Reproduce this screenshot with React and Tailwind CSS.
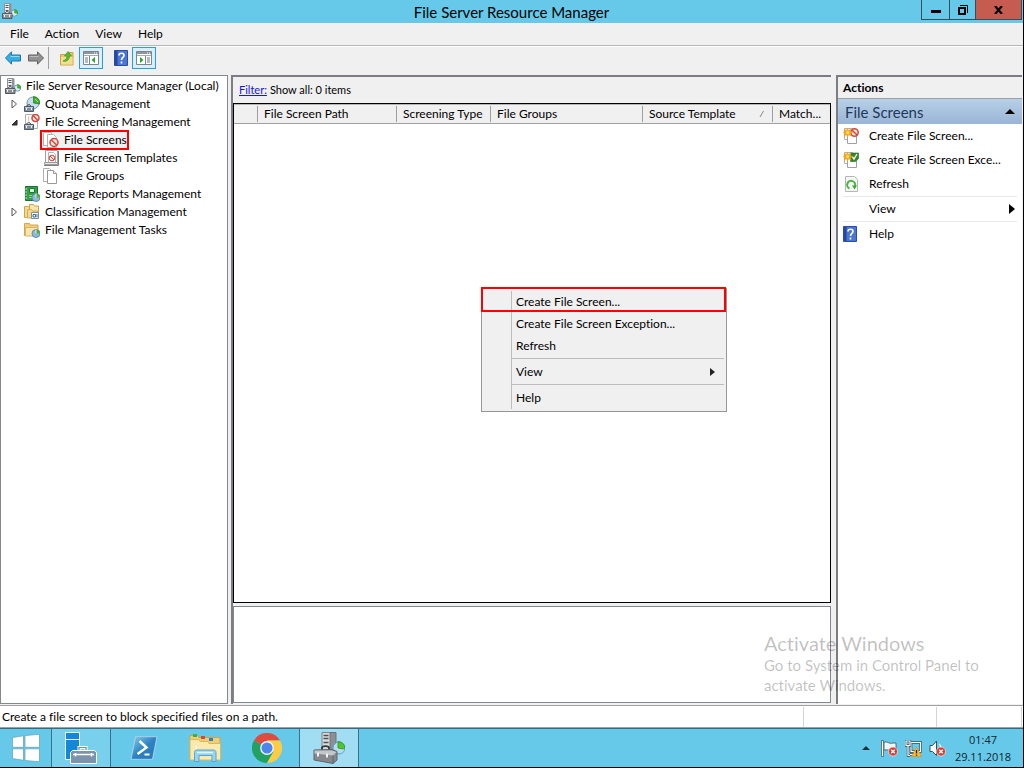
import clsx from 'clsx';

const ServerIcon = ({ className = 'size-8' }) => (
  <svg viewBox="0 0 32 32" className={className} aria-hidden="true">
    <path d="M9 .5h9v19H9z" fill="#d9dcde" stroke="#7d8286" />
    <path d="M17 .5h6v20h-6z" fill="#8b9094" stroke="#6d7276" />
    <path d="M10.500 3.500h5M10.500 6.500h5M10.500 10.500h5" stroke="#4b5054" strokeWidth="1.500" />
    <circle cx="26" cy="16" r="6" fill="#b4dcf2" stroke="#5b9fc8" />
    <path d="M25 16V9.500a7 7 0 0 1 7 6.500l-2 1z" fill="#4fc52c" stroke="#2c8d16" strokeWidth=".7" />
    <path d="M9 18v-2c0-2.500 7-2.500 7 0v2" fill="none" stroke="#33383c" strokeWidth="1.800" />
    <path d="M1 18l18-.5 5 2v8.500l-4 3.500-19-3.500z" fill="#85898d" stroke="#5f6468" />
    <path d="M1.500 18.500h17.500l4.500 1.500-3.500 3.500-18.500-2z" fill="#c3c7ca" />
    <path d="M5 20.500v4M14 21.500v4" stroke="#f1f2f3" strokeWidth="2" />
    <path d="M20 23.500v8" stroke="#5f6468" />
  </svg>
);

const SmallServerIcon = () => (
  <svg viewBox="0 0 16 16" className="size-4" aria-hidden="true">
    <path d="M2.500.5h6v12h-6z" fill="#f0f1f2" stroke="#8f9498" />
    <path d="M7 1h2.500v11H7z" fill="#8f9498" />
    <path d="M3.500 2.500h3M3.500 4.500h3M3.500 7.500h3" stroke="#53585c" />
    <circle cx="12.500" cy="10" r="3.200" fill="#d7ebf6" stroke="#6996b2" strokeWidth=".9" />
    <path d="M12.500 10V6.400a3.600 3.600 0 0 1 3.400 4z" fill="#3fb52c" stroke="#2c8d16" strokeWidth=".4" />
    <path d="M3.500 10.500V9.400c0-1 3.500-1 3.500 0v1.100" fill="none" stroke="#3d4246" />
    <path d="M.5 10.500h9.500v5H.5z" fill="#8a8f93" stroke="#565b5f" />
    <path d="M1 11.500h8.500" stroke="#c8cccf" />
    <path d="M2.500 12v2M7.500 12v2" stroke="#f1f2f3" />
  </svg>
);

const Toolbox = () => (
  <>
    <path d="M3 10.500V9.500c0-1 3.500-1 3.500 0v1" fill="none" stroke="#2f3b46" />
    <path d="M.5 10.500h9v5h-9z" fill="#84909b" stroke="#4b5966" />
    <path d="M1 11.500h8" stroke="#c2ccd5" />
    <path d="M2.500 12v2M7.500 12v2" stroke="#f0f3f5" />
  </>
);

const NoSign = ({ cx, cy, r }) => (
  <>
    <circle cx={cx} cy={cy} r={r} fill="#fbe7e4" stroke="#d2463a" strokeWidth="1.500" />
    <path d={`M${cx - r * 0.7} ${cy - r * 0.7}l${r * 1.4} ${r * 1.4}`} stroke="#d2463a" strokeWidth="1.500" />
  </>
);

const QuotaIcon = () => (
  <svg viewBox="0 0 16 16" className="size-4" aria-hidden="true">
    <circle cx="9" cy="7" r="6" fill="#c6deee" stroke="#7793aa" />
    <path d="M9.500 7V.5A6.500 6.500 0 0 1 15.800 8z" fill="#3fae2a" stroke="#247b18" strokeWidth=".7" />
    <path d="M11 3l3 3" stroke="#a8e48b" />
    <Toolbox />
  </svg>
);

const ScreeningIcon = () => (
  <svg viewBox="0 0 16 16" className="size-4" aria-hidden="true">
    <path d="M1.500.5h12v14h-12z" fill="#fafafa" stroke="#b0b0b0" />
    <path d="M4.500 2.500v5" stroke="#c8c8c8" />
    <NoSign cx={11.5} cy={4} r={3.5} />
    <Toolbox />
  </svg>
);

const FileScreensIcon = () => (
  <svg viewBox="0 0 16 16" className="size-4" aria-hidden="true">
    <path d="M.5.5h8v13h-8z" fill="#fff" stroke="#b3b3b3" />
    <path d="M4.500 2.500h6l3 3v10h-9z" fill="#fff" stroke="#b3b3b3" />
    <NoSign cx={11} cy={10.5} r={4} />
  </svg>
);

const TemplatesIcon = () => (
  <svg viewBox="0 0 16 16" className="size-4" aria-hidden="true">
    <path d="M2.500.5h12v12h-12z" fill="#f6f8fa" stroke="#a0a0a0" />
    <path d="M15.500 1v14.500H1" fill="none" stroke="#7e7e7e" />
    <path d="M5.500 2.500h5l2 2v8h-7z" fill="#fff" stroke="#b3b3b3" />
    <path d="M1.500 12.500h13v2h-13z" fill="#e5e8ea" stroke="#9a9a9a" />
    <circle cx="9" cy="8" r="2.800" fill="#fbe7e4" stroke="#d2463a" />
    <path d="M7 6l4 4" stroke="#d2463a" />
  </svg>
);

const FilesIcon = () => (
  <svg viewBox="0 0 16 16" className="size-4" aria-hidden="true">
    <path d="M.5.5h6l3 3v10h-9z" fill="#fff" stroke="#b0b0b0" />
    <path d="M4.500 2.500h6l3 3v10h-9z" fill="#fff" stroke="#9a9a9a" />
    <path d="M10.500 2.500v3h3" fill="#eee" stroke="#9a9a9a" />
  </svg>
);

const MiniPie = () => (
  <>
    <circle cx="12" cy="11.500" r="4" fill="#8fb9dc" stroke="#4d7ba5" strokeWidth=".8" />
    <path d="M12 11.500v-4a4 4 0 0 1 4 4z" fill="#54ac3a" />
    <path d="M12 11.500v-4" stroke="#fff" strokeWidth=".8" />
  </>
);

const ReportsIcon = () => (
  <svg viewBox="0 0 16 16" className="size-4" aria-hidden="true">
    <path d="M1.500.5h12v14h-12z" fill="#35a046" stroke="#167030" />
    <path d="M5.500 2.500h5v4h-5z" fill="#d9f1d9" stroke="#1c7832" />
    <path d="M0 3h3M0 6h3M0 9h3M0 12h3" stroke="#c7dccb" />
    <path d="M5 9.500h4M5 11.500h3" stroke="#8dd08e" />
    <MiniPie />
  </svg>
);

const ClassificationIcon = () => (
  <svg viewBox="0 0 16 16" className="size-4" aria-hidden="true">
    <path d="M.5 2.500h4l1 1h3v10h-8z" fill="#f3d98d" stroke="#c9a654" />
    <path d="M5.500.5h4l1 1.500h4v10h-9z" fill="#f8e5a9" stroke="#c9a654" />
    <path d="M3.500 5.500h4l1 1.500h5v7h-10z" fill="#f5d889" stroke="#d0ad5e" />
    <path d="M7.500 8.500h7v6h-7z" fill="#fff" stroke="#7b8fa3" />
    <path d="M9 10.500h2.500v2.500H9zM13 10v3.500" fill="none" stroke="#3d6b99" />
  </svg>
);

const TasksIcon = () => (
  <svg viewBox="0 0 16 16" className="size-4" aria-hidden="true">
    <path d="M.5 1.500h5l1 1.500h7.500v10.500H.5z" fill="#f0cd78" stroke="#cfa755" />
    <path d="M1.500 5.500h12l-1 8.500h-11z" fill="#fae6aa" stroke="#dab566" />
    <MiniPie />
  </svg>
);

const HelpIcon = () => (
  <svg viewBox="0 0 14 16" className="h-4 w-3.5" aria-hidden="true">
    <path d="M.5.5h13v15H.5z" fill="#4a77d6" stroke="#2a4ea6" />
    <path d="M1 1h2.500v14H1z" fill="#2747a0" />
    <path d="M5 5.500C5 2.500 10 2.500 10 5.500c0 2-2.500 2-2.500 4.500M7.500 11.500v2" fill="none" stroke="#fff" strokeWidth="1.600" />
  </svg>
);

const ArrowIcon = ({ forward }) => (
  <svg viewBox="0 0 16 14" className="h-3.5 w-4" aria-hidden="true">
    {forward ? (
      <path d="M15.500 7L9.500.8V4H.5v6h9v3.200z" fill="#929292" stroke="#606060" />
    ) : (
      <path d="M.5 7L6.500.8V4h9v6h-9v3.200z" fill="#35aee3" stroke="#2277ad" />
    )}
    <path d={forward ? 'M1.500 5.500h9' : 'M5.500 5.500h9'} stroke={forward ? '#bdbdbd' : '#90daf6'} />
  </svg>
);

const UpFolderIcon = () => (
  <svg viewBox="0 0 16 16" className="size-4" aria-hidden="true">
    <path d="M1.500 4.500h7l1-2h4.500v12.500H1.500z" fill="#e9c767" stroke="#c9a44a" />
    <path d="M2 7h11.500v7.500H2z" fill="#f6dd8e" />
    <path d="M4 11c3-1 4-3 4-5H5.500L9 1.500 12.500 6h-2c0 4-3 6-6.500 5z" fill="#55bb32" stroke="#3b9a22" strokeWidth=".7" />
  </svg>
);

const PaneIcon = ({ right }) => (
  <svg viewBox="0 0 16 14" className="h-3.5 w-4" aria-hidden="true">
    <path d="M.5.500h15v13H.5z" fill="#fff" stroke="#7d858d" />
    <path d="M1 1h14v2H1z" fill="#8d969f" />
    <path d="M11 2h1M13 2h1" stroke="#fff" />
    <path d="M1 4.500h14" stroke="#a5adb4" />
    <path d={right ? 'M9.500 5v8' : 'M6.500 5v8'} stroke="#7d858d" />
    <path d={right ? 'M11 7h3M11 9h3M11 11h3' : 'M2 7h3M2 9h3M2 11h3'} stroke="#62778c" />
    <path d={right ? 'M4 6l3.500 3L4 12z' : 'M12 6L8.500 9l3.500 3z'} fill="#2fa32b" />
  </svg>
);

const NewFileIcon = ({ exception }) => (
  <svg viewBox="0 0 16 16" className="size-4" aria-hidden="true">
    <path d="M1.500.5h8v11h-8z" fill="#fff" stroke="#b0b0b0" />
    <path d="M4.500 4.500h9v11h-9z" fill="#fff" stroke="#a0a0a0" />
    {exception ? (
      <>
        <path d="M7.500 1h8v5.500l-3 3h-5z" fill="#35872c" stroke="#246a20" strokeWidth=".6" />
        <path d="M9.500 5l1.500 2 3-5" fill="none" stroke="#fff" strokeWidth="1.300" />
      </>
    ) : (
      <NoSign cx={11.5} cy={4.5} r={3.7} />
    )}
    <path d="M4.500 0l1 2.500L8 1 7 3.500l3 1-3 1L8 8 5.500 6.800l-1 2.700-1-2.700L1 8l1-2.500L0 4.500l2-1L1 1l2.500 1.500z" fill="#f7a916" stroke="#e9a52c" strokeWidth=".5" />
    <circle cx="4.700" cy="4.500" r="1.500" fill="#ffe36b" />
  </svg>
);

const RefreshIcon = () => (
  <svg viewBox="0 0 16 16" className="size-4" aria-hidden="true">
    <path d="M2.500.5h9l3 3v12h-12z" fill="#f7f7f7" stroke="#b6b6b6" />
    <path d="M6.500 12.500a4 4 0 1 1 5.500-2.500" fill="none" stroke="#4cb53c" strokeWidth="2" />
    <path d="M9 9.500h5L11.500 13.500z" fill="#39a935" />
  </svg>
);

const WindowsLogo = () => (
  <svg viewBox="0 0 28 28" className="size-7" aria-hidden="true">
    <path d="M.5 3.500l11-1.700v11.500H.5zM13 1.600L27.500.3v13H13zM.5 14.800h11v11.500L.5 24.600zM13 14.800h14.500v12.900L13 26.500z" fill="#fff" stroke="#5e9db7" strokeWidth=".7" />
  </svg>
);

const ServerManagerIcon = () => (
  <svg viewBox="0 0 32 32" className="size-8" aria-hidden="true">
    <path d="M.5.5h14v27H.5z" fill="#1488d8" stroke="#e8f7fd" />
    <path d="M1 7.500h13" stroke="#e8f7fd" />
    <path d="M14 18.500v-3h7v3" fill="none" stroke="#fff" strokeWidth="3" />
    <path d="M14 18.500v-3h7v3" fill="none" stroke="#6e8aa6" strokeWidth="1.200" />
    <path d="M7.500 18.500h22l2 2v11h-26v-11z" fill="#7d92ab" stroke="#fff" />
    <path d="M8 22.500h21M10.500 21v3.500M26.500 21v3.500" stroke="#fff" strokeWidth="1.400" />
  </svg>
);

const PowerShellIcon = () => (
  <svg viewBox="0 0 28 24" className="h-6 w-7" aria-hidden="true">
    <defs>
      <linearGradient id="ps" x1="0" y1="0" x2="1" y2="1">
        <stop offset="0" stopColor="#8dd0ee" />
        <stop offset=".5" stopColor="#2d83c4" />
        <stop offset="1" stopColor="#2a74b5" />
      </linearGradient>
    </defs>
    <path d="M5.500.7H27L22.500 23.300H1z" fill="url(#ps)" stroke="#a9d2e6" />
    <path d="M9.500 5l7 6.500-9 6.500" fill="none" stroke="#fff" strokeWidth="2.500" />
    <path d="M14.500 18.500h5" stroke="#fff" strokeWidth="2" />
  </svg>
);

const ExplorerIcon = () => (
  <svg viewBox="0 0 32 30" className="size-8" aria-hidden="true">
    <path d="M1 2.500h8l1 2h21V26H1z" fill="#f0cf72" stroke="#cda448" />
    <path d="M4 1h4v3H4z" fill="#3eae4b" />
    <path d="M12 3h4v3h-4z" fill="#d24b36" />
    <path d="M20 5h4v3h-4z" fill="#357ec2" />
    <path d="M1 6.500h9l1 2h8l1 2h11.500V27H1z" fill="#fbe9ad" stroke="#ddb75b" />
    <path d="M7 12l1 14" stroke="#fffbe0" strokeWidth="1.500" />
    <path d="M5.500 19.500c0-2 1-2.500 2.500-2.500h16c2 0 3 1 3 2.500v9h-4v-6h-13v6h-4.500z" fill="#97d6f1" stroke="#5aa3cb" />
    <path d="M8 19.500h16" stroke="#dff5fd" strokeWidth="1.500" />
  </svg>
);

const ChromeIcon = () => (
  <svg viewBox="0 0 30 30" className="size-[30px]" aria-hidden="true">
    <path d="M15 15L2 7.500A15 15 0 0 1 28 7.500H15z" fill="#df4b3d" />
    <path d="M15 15L8.500 11.200 2 7.500A15 15 0 0 0 15 30l6.500-11.200z" fill="#22a162" />
    <path d="M15 30A15 15 0 0 0 28 7.500H15l6.500 11.200z" fill="#fdcc43" />
    <circle cx="15" cy="15" r="6.900" fill="#f1f1f1" />
    <circle cx="15" cy="15" r="5.500" fill="#4c86ec" />
  </svg>
);

const ErrorBadge = () => (
  <>
    <circle cx="12" cy="11.500" r="4.500" fill="#dc382d" stroke="#fbe9e7" strokeWidth=".7" />
    <path d="M10.200 9.700l3.600 3.600M13.800 9.700l-3.600 3.600" stroke="#fff" strokeWidth="1.400" />
  </>
);

const FlagTrayIcon = () => (
  <svg viewBox="0 0 17 17" className="size-[17px]" aria-hidden="true">
    <path d="M1.500.5v16" stroke="#2d4d5b" strokeWidth="3" />
    <path d="M3 2.500c3-2 5 2 9 .5h3v7c-4 2-7-1-12 0z" fill="#eef7fa" stroke="#38505c" strokeWidth=".8" />
    <path d="M1.500 1v15" stroke="#fff" strokeWidth="1.500" />
    <ErrorBadge />
  </svg>
);

const NetworkTrayIcon = () => (
  <svg viewBox="0 0 17 17" className="size-[17px]" aria-hidden="true">
    <path d="M6 2.500h9.500v9H6zM5 14.500h6" fill="#67c9e9" stroke="#34505e" strokeWidth="2.600" />
    <path d="M6 2.500h9.500v9H6zM5 14.500h6" fill="none" stroke="#fff" strokeWidth="1.200" />
    <path d="M1 1h4v4.500H1zM3 6v9.500h2" fill="#9bd6ea" stroke="#34505e" strokeWidth="2.400" />
    <path d="M1 1h4v4.500H1zM3 6v9.500h2" fill="none" stroke="#fff" strokeWidth="1.200" />
    <path d="M11.500 7l5 9.500h-10z" fill="#fcb930" stroke="#d58a15" strokeWidth=".6" />
    <path d="M11.500 10v3.500M11.500 14.500v1.300" stroke="#342808" strokeWidth="1.300" />
  </svg>
);

const SoundTrayIcon = () => (
  <svg viewBox="0 0 17 17" className="size-[17px]" aria-hidden="true">
    <path d="M1 5.500h2.500L7.500 1v14.500l-4-4H1z" fill="#f6fbfd" stroke="#38505c" />
    <path d="M10 4c1.500 1 2 2 2 4" fill="none" stroke="#fff" strokeWidth="1.200" />
    <ErrorBadge />
  </svg>
);

const TREE = [
  { label: 'Quota Management', icon: <QuotaIcon />, level: 1, arrow: 'closed' },
  { label: 'File Screening Management', icon: <ScreeningIcon />, level: 1, arrow: 'open' },
  { label: 'File Screens', icon: <FileScreensIcon />, level: 2, selected: true },
  { label: 'File Screen Templates', icon: <TemplatesIcon />, level: 2 },
  { label: 'File Groups', icon: <FilesIcon />, level: 2 },
  { label: 'Storage Reports Management', icon: <ReportsIcon />, level: 1 },
  { label: 'Classification Management', icon: <ClassificationIcon />, level: 1, arrow: 'closed' },
  { label: 'File Management Tasks', icon: <TasksIcon />, level: 1 },
];

const COLUMNS = [
  { label: '', width: 'w-6' },
  { label: 'File Screen Path', width: 'w-[139px]' },
  { label: 'Screening Type', width: 'w-[94px]' },
  { label: 'File Groups', width: '' },
  { label: 'Source Template', width: 'w-[130px]', sorted: true },
  { label: 'Match...', width: 'w-[57px]' },
];

function TitleBar() {
  return (
    <header className="relative flex h-[23px] shrink-0 items-center justify-center bg-[#67c9e9]">
      <span className="absolute left-0.5 top-[3px]"><SmallServerIcon /></span>
      <h1 className="text-[15px] leading-5">File Server Resource Manager</h1>
      <div className="absolute right-px top-0 flex h-5 border border-t-0 border-[#31505c]">
        <button aria-label="Minimize" className="flex w-7 items-center justify-center border-r border-[#31505c]">
          <span className="mt-1 h-[3px] w-2.5 bg-black" />
        </button>
        <button aria-label="Restore" className="flex w-[26px] items-center justify-center border-r border-[#31505c]">
          <svg viewBox="0 0 10 10" className="size-2.5" aria-hidden="true">
            <path d="M1 3h6v6H1z" fill="none" stroke="#000" strokeWidth="2" />
            <path d="M2 .5h7.500V8" fill="none" stroke="#000" />
          </svg>
        </button>
        <button aria-label="Close" className="flex w-[45px] items-center justify-center bg-[#c65b50]">
          <svg viewBox="0 0 9 8" className="h-2 w-[9px]" aria-hidden="true">
            <path d="M1 0l7 8M8 0L1 8" stroke="#000" strokeWidth="2.200" />
          </svg>
        </button>
      </div>
    </header>
  );
}

function Toolbar() {
  return (
    <div className="flex h-[29px] shrink-0 items-center border-t border-white pb-1.5 pl-1">
      <button aria-label="Back" className="mr-1.5 px-px"><ArrowIcon /></button>
      <button aria-label="Forward"><ArrowIcon forward /></button>
      <span className="ml-1 mr-2.5 h-[22px] w-px bg-[#a0a0a0]" />
      <button aria-label="Up" className="mr-1"><UpFolderIcon /></button>
      <button aria-label="Show console tree" className="mr-[11px] flex h-[22px] w-6 items-center justify-center border border-[#26a0da] bg-[#d9effb]">
        <PaneIcon />
      </button>
      <button aria-label="Help" className="mr-1"><HelpIcon /></button>
      <button aria-label="Show action pane" className="flex h-[22px] w-6 items-center justify-center border border-[#26a0da] bg-[#d9effb]">
        <PaneIcon right />
      </button>
    </div>
  );
}

function TreePane() {
  return (
    <nav aria-label="Console tree" className="w-[228px] shrink-0 border border-[#828790] bg-white pt-px">
      <button className="flex h-[18px] items-center gap-[5px] pl-1">
        <SmallServerIcon />
        <span className="whitespace-nowrap">File Server Resource Manager (Local)</span>
      </button>
      <ul>
        {TREE.map((item) => (
          <li key={item.label} className={clsx('flex h-[18px] items-center', item.level === 1 ? 'pl-2' : 'pl-10')}>
            {item.level === 1 && (
              <span className="flex w-3.5 shrink-0 pl-0.5">
                {item.arrow === 'closed' && (
                  <svg viewBox="0 0 7 10" className="h-2.5 w-[7px]" aria-hidden="true">
                    <path d="M1 1l4.500 4L1 9z" fill="#fff" stroke="#555" />
                  </svg>
                )}
                {item.arrow === 'open' && (
                  <svg viewBox="0 0 7 7" className="size-[7px]" aria-hidden="true">
                    <path d="M6 1v5H1z" fill="#404040" stroke="#222" />
                  </svg>
                )}
              </span>
            )}
            <button
              className={clsx(
                'flex h-[18px] items-center gap-[5px] whitespace-nowrap pr-px',
                item.level === 1 ? 'pl-px' : 'pl-0.5',
                item.selected && 'bg-[#f0f0f0] outline-2 -outline-offset-1 outline-[#ff0000]',
              )}
            >
              {item.icon}
              {item.label}
            </button>
          </li>
        ))}
      </ul>
    </nav>
  );
}

function ContextMenu() {
  return (
    <div className="absolute left-[248px] top-[211px] w-[246px] border border-[#979797] bg-[#f0f0f0] p-0.5">
      <div className="flex flex-col [&>button]:h-[22px] [&>button]:pl-8 [&>button]:text-left">
        <button>Create File Screen...</button>
        <button>Create File Screen Exception...</button>
        <button>Refresh</button>
        <hr className="mb-0.5 ml-7 mt-px border-[#bdbdbd]" />
        <button className="flex items-center justify-between pr-[9px]">
          View
          <svg viewBox="0 0 5 8" className="h-2 w-[5px]" aria-hidden="true"><path d="M0 0l5 4-5 4z" fill="#222" /></svg>
        </button>
        <hr className="mb-0.5 ml-7 mt-px border-[#bdbdbd]" />
        <button>Help</button>
      </div>
      <span className="absolute inset-y-0.5 left-[29px] w-px bg-[#bdbdbd]" />
      <span className="pointer-events-none absolute -left-px -top-0.5 right-0 h-[25px] border-2 border-[#ff0000]" />
    </div>
  );
}

function CenterPane() {
  return (
    <main className="relative flex min-w-0 flex-1 flex-col border-l-2 border-t-2 border-[#7b7d80] pb-px">
      <p className="flex h-[26px] shrink-0 items-center gap-[3px] pl-1.5 text-[11px]">
        <a href="#filter" className="text-[#1515ee] underline">Filter:</a>
        <span>Show all: 0 items</span>
      </p>
      <section className="min-h-0 flex-1 border border-black bg-white">
        <table className="w-full table-fixed border-separate border-spacing-0">
          <thead>
            <tr className="bg-[#f0f0f0]">
              {COLUMNS.map((col, i) => (
                <th key={col.label || 'icon'} className={clsx('h-5 border-b border-t border-b-[#a0a0a0] border-t-[#b5b5b5] p-0 text-left font-normal', col.width)}>
                  <div className={clsx('flex h-4 items-center justify-between whitespace-nowrap pl-1.5', i < 5 && 'border-r border-[#a0a0a0]')}>
                    {col.label}
                    {col.sorted && (
                      <svg viewBox="0 0 5 6" className="mr-2 h-1.5 w-[5px]" aria-hidden="true">
                        <path d="M4.500 0L1 6" stroke="#888" />
                      </svg>
                    )}
                  </div>
                </th>
              ))}
            </tr>
          </thead>
        </table>
      </section>
      <section aria-label="Details" className="mt-[3px] h-[97px] shrink-0 border border-[#828790] bg-white" />
      <ContextMenu />
    </main>
  );
}

const Action = ({ icon, children, more }) => (
  <button className="flex h-6 w-full items-center pl-[5px] pr-[7px]">
    <span className="flex w-[26px] shrink-0">{icon}</span>
    <span className="flex-1 truncate text-left">{children}</span>
    {more && (
      <svg viewBox="0 0 6 10" className="h-2.5 w-1.5" aria-hidden="true"><path d="M0 0l6 5-6 5z" fill="#000" /></svg>
    )}
  </button>
);

function ActionsPane() {
  return (
    <aside className="w-[186px] shrink-0 border-l-2 border-t-2 border-[#7b7d80] bg-white">
      <h2 className="h-[22px] border-b border-[#a0a0a0] bg-[#f0f0f0] pl-[5px] font-bold leading-[22px]">Actions</h2>
      <div className="flex h-[25px] items-center justify-between bg-linear-to-b from-[#b7d0e8] to-[#9ab5d5] pl-[7px] pr-[7px] text-[15px] text-[#1e395b]">
        <h3>File Screens</h3>
        <svg viewBox="0 0 10 5" className="h-[5px] w-2.5" aria-hidden="true"><path d="M5 0l5 5H0z" fill="#000" /></svg>
      </div>
      <Action icon={<NewFileIcon />}>Create File Screen...</Action>
      <Action icon={<NewFileIcon exception />}>Create File Screen Exce...</Action>
      <Action icon={<RefreshIcon />}>Refresh</Action>
      <hr className="mx-[5px] border-[#e8e8e8]" />
      <Action more>View</Action>
      <hr className="mx-[5px] border-[#e8e8e8]" />
      <Action icon={<HelpIcon />}>Help</Action>
    </aside>
  );
}

function Taskbar() {
  return (
    <footer className="flex h-10 shrink-0 items-stretch border-b border-t border-b-black border-t-[#3a6a7b] bg-[#67c9e9] [&>button]:flex [&>button]:shrink-0 [&>button]:items-center [&>button]:justify-center">
      <button aria-label="Start" className="w-[51px]"><WindowsLogo /></button>
      <button aria-label="Server Manager" className="w-[60px] border-x border-[#357488] bg-[#79d0ed]"><ServerManagerIcon /></button>
      <button aria-label="PowerShell" className="w-[66px]"><PowerShellIcon /></button>
      <button aria-label="File Explorer" className="w-14"><ExplorerIcon /></button>
      <button aria-label="Chrome" className="w-[66px] pl-0.5"><ChromeIcon /></button>
      <button aria-label="File Server Resource Manager" className="w-[60px] border-x border-[#357488] bg-[#a2def3]">
        <ServerIcon />
      </button>
      <div className="ml-auto flex items-center gap-[7px] pr-3">
        <button aria-label="Show hidden icons" className="mr-1">
          <svg viewBox="0 0 8 4" className="h-1 w-2" aria-hidden="true"><path d="M4 0l4 4H0z" fill="#17313b" /></svg>
        </button>
        <FlagTrayIcon />
        <NetworkTrayIcon />
        <SoundTrayIcon />
        <time className="ml-0.5 text-center font-['Open_Sans'] text-[11px] leading-[17px] text-[#10242c]">
          01:47<br />29.11.2018
        </time>
      </div>
    </footer>
  );
}

export default function App() {
  return (
    <div className="relative flex h-screen flex-col overflow-hidden border-r border-black bg-[#f0f0f0] font-['Lato',sans-serif] text-[12px] leading-[18px] text-black [font-variant-ligatures:none]">
      <TitleBar />
      <div className="flex h-[23px] shrink-0 items-center gap-4 border-b border-[#b5b5ba] pl-2.5">
        <button>File</button>
        <button>Action</button>
        <button>View</button>
        <button>Help</button>
      </div>
      <Toolbar />
      <div className="flex min-h-0 flex-1 gap-[3px] pb-px pr-px">
        <TreePane />
        <div className="flex min-w-0 flex-1 gap-[5px]">
          <CenterPane />
          <ActionsPane />
        </div>
      </div>
      <div className="flex h-[23px] shrink-0 items-center border-y border-[#a0a0a0] bg-white pl-0.5">
        <span className="flex-1">Create a file screen to block specified files on a path.</span>
        <span className="h-5 w-[133px] border-l border-[#d4d4d4]" />
        <span className="mr-px h-5 w-[86px] border-x border-[#d4d4d4]" />
      </div>
      <Taskbar />
      <div className="pointer-events-none absolute bottom-[73px] right-0 w-[259px] text-[15px] leading-5 text-black/25">
        <p className="text-[20px] leading-6">Activate Windows</p>
        <p>Go to System in Control Panel to<br />activate Windows.</p>
      </div>
    </div>
  );
}
